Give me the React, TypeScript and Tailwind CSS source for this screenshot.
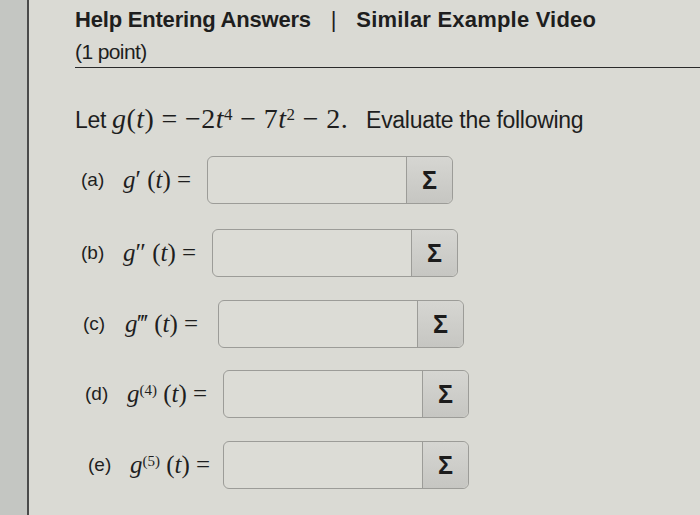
import React from 'react';

const serif = { fontFamily: '"Liberation Serif", "DejaVu Serif", serif' };

const Sigma = () => (
  <div className="w-[46px] h-full border-l border-[#9c9c98] bg-gradient-to-b from-[#d6d6d2] to-[#c6c6c2] flex items-center justify-center rounded-r-md">
    <span className="text-[25px] font-bold text-[#1c1c1c] leading-none font-['Liberation_Sans',sans-serif]">Σ</span>
  </div>
);

type Row = { tag: string; sup: React.ReactNode; pad: string; gap: string; mt: string };

const rows: Row[] = [
  { tag: '(a)', sup: <span className="not-italic">′</span>, pad: 'pl-[3px]', gap: 'w-[207px]', mt: 'mt-[16px]' },
  { tag: '(b)', sup: <span className="not-italic">″</span>, pad: 'pl-[3px]', gap: 'w-[212px]', mt: 'mt-[25px]' },
  { tag: '(c)', sup: <span className="not-italic">‴</span>, pad: 'pl-[5px]', gap: 'w-[218px]', mt: 'mt-[23px]' },
  { tag: '(d)', sup: <sup className="not-italic text-[15px]">(4)</sup>, pad: 'pl-[7px]', gap: 'w-[223px]', mt: 'mt-[22px]' },
  { tag: '(e)', sup: <sup className="not-italic text-[15px]">(5)</sup>, pad: 'pl-[10px]', gap: 'w-[223px]', mt: 'mt-[23px]' },
];

export default function App() {
  return (
    <div className="w-[700px] h-[515px] flex bg-[#dadad4] overflow-hidden font-['Liberation_Sans',Arial,sans-serif] text-[#1e1e1e]">
      {/* left strip of the screen */}
      <div className="w-[29px] shrink-0 bg-[#c4c6c2] border-r-2 border-[#4a4a4a]" />

      <div className="flex-1 flex flex-col pt-[5px]">
        <div className="pl-[46px] flex items-center text-[22px] font-bold tracking-[-0.2px] h-[28px]">
          <span>Help Entering Answers</span>
          <span className="mx-[20px] font-normal">|</span>
          <span className="tracking-[0.2px]">Similar Example Video</span>
        </div>
        <div className="pl-[46px] text-[21px] tracking-[-0.6px] mt-[3px] h-[28px]">(1 point)</div>
        <div className="ml-[46px] mt-[3px] border-t-[1.5px] border-[#2a2a2a]" />

        <div className="pl-[46px] mt-[30px] flex items-baseline text-[23px] tracking-[-0.3px]">
          <span className="mr-[6px]">Let</span>
          <span className="text-[28px] whitespace-pre tracking-[0.4px]" style={serif}>
            <i>g</i>(<i>t</i>) = −2<i>t</i><sup className="text-[17px]">4</sup> − 7<i>t</i><sup className="text-[17px]">2</sup> − 2.
          </span>
          <span className="ml-[18px]">Evaluate the following</span>
        </div>

        {rows.map((r) => (
          <div key={r.tag} className={`flex items-center ${r.mt}`}>
            <div className={`${r.gap} shrink-0 flex items-center pl-[49px]`}>
              <div className={`flex items-center ${r.pad}`}>
                <span className="text-[19px] w-[42px]">{r.tag}</span>
                <span className="text-[25px] whitespace-pre" style={serif}>
                  <i>g</i>{r.sup} (<i>t</i>) =
                </span>
              </div>
            </div>
            <div className="w-[246px] h-[48px] -ml-[29px] flex border border-[#9c9c98] rounded-md bg-[#dcdcd6]">
              <div className="flex-1" />
              <Sigma />
            </div>
          </div>
        ))}
      </div>
    </div>
  );
}
